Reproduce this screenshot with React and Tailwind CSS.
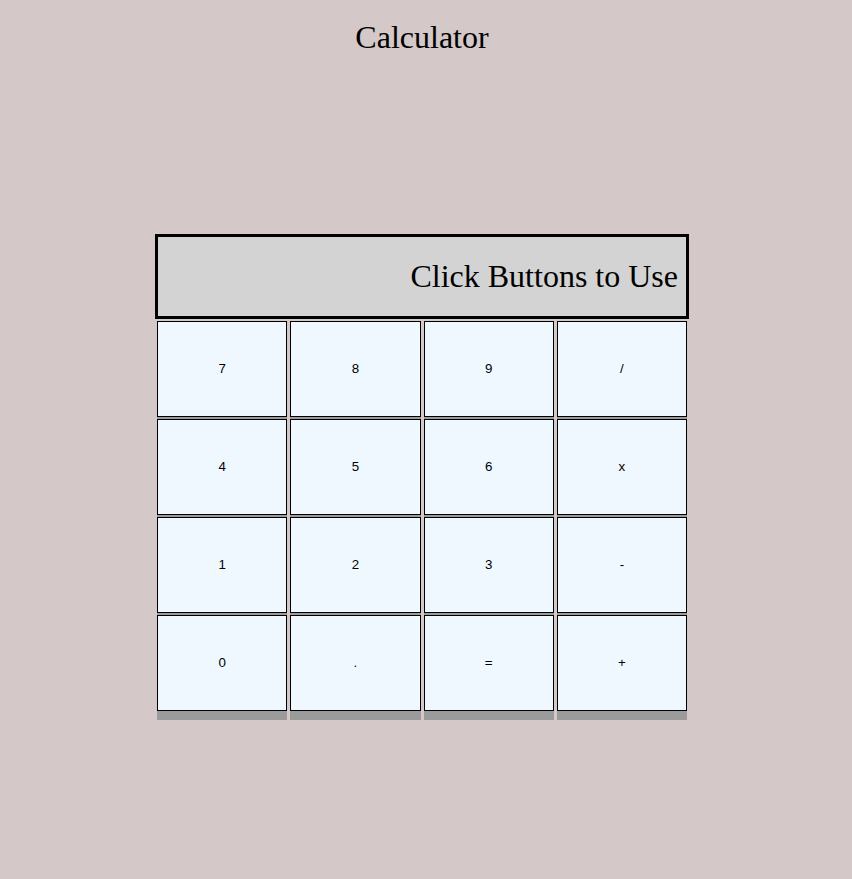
import { useState } from "react";

const KEYS = ["7", "8", "9", "/", "4", "5", "6", "x", "1", "2", "3", "-", "0", ".", "=", "+"];

export default function App() {
  const [display, setDisplay] = useState("Click Buttons to Use");

  const press = (k) => {
    setDisplay((d) => {
      const cur = d === "Click Buttons to Use" || d === "Error" ? "" : d;
      if (k === "=") {
        try {
          const expr = cur.replace(/x/g, "*");
          const val = Function(`"use strict"; return (${expr || 0});`)();
          return String(val);
        } catch {
          return "Error";
        }
      }
      return cur + k;
    });
  };

  return (
    <div className="min-h-screen bg-[#d4c8c8] font-['Liberation_Serif',serif]">
      <div className="w-[844px] flex flex-col items-center">
        <h1 className="mt-[19px] text-[32px] leading-[normal] text-black">Calculator</h1>

        <div className="mt-[178px] w-[534px]">
          <div className="h-[85px] border-[3px] border-black bg-[#d3d3d3] flex items-center justify-end pr-[8px] text-[32px] leading-[normal] text-black overflow-hidden whitespace-nowrap">
            {display}
          </div>

          <div className="grid grid-cols-4 gap-x-[3px] gap-y-[2px] px-[2px] pt-[2px]">
            {KEYS.map((k) => (
              <button
                key={k}
                onClick={() => press(k)}
                className="h-[96px] border border-black bg-[#f0f8ff] shadow-[0_9px_0_#9b9b9b] font-['Liberation_Sans',Arial,sans-serif] text-[13.33px] text-black"
              >
                {k}
              </button>
            ))}
          </div>
        </div>
      </div>
    </div>
  );
}
